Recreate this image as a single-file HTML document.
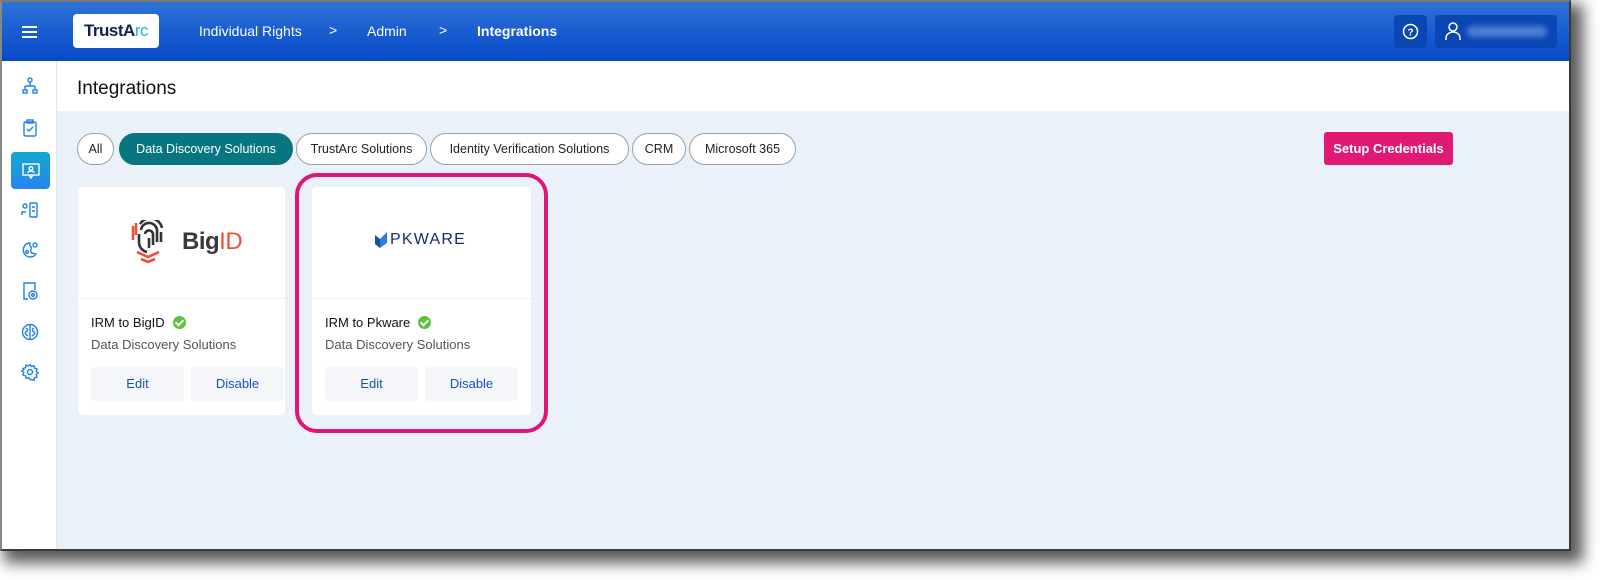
<!DOCTYPE html>
<html><head><meta charset="utf-8"><style>
*{box-sizing:border-box;margin:0;padding:0}
body{width:1600px;height:580px;background:#fff;font-family:"Liberation Sans",sans-serif;position:relative;overflow:hidden}
.frame{position:absolute;left:0;top:0;width:1571px;height:551px;background:#eaf1f9;border:2px solid #3a3a3a;border-top-color:#777;border-left-color:#888;box-shadow:8px 8px 14px 4px rgba(0,0,0,.65)}
.hdr{position:absolute;left:0;top:0;width:1567px;height:59px;background:linear-gradient(#2f72d6,#0549c9)}
.abs{position:absolute}
.wt{color:#fff;font-size:14px}
.side{position:absolute;left:0;top:59px;width:55px;height:488px;background:#fff;border-right:1px solid #e3e8ef}
.title{position:absolute;left:55px;top:59px;width:1512px;height:50px;background:#fff}
.chip{position:absolute;top:131px;height:32px;border:1px solid #9aa0a6;border-radius:16px;background:#fff;font-size:12.5px;color:#222;line-height:30px;text-align:center}
.card{position:absolute;top:185px;height:228px;background:#fff;border-radius:4px}
.btn{position:absolute;top:180px;height:34px;width:93px;background:#f4f6fa;border-radius:3px;color:#1a4fc4;font-size:13px;text-align:center;line-height:34px}
.ct{position:absolute;left:13px;top:128px;font-size:13px;color:#111}
.cs{position:absolute;left:13px;top:150px;font-size:13px;color:#555}
.ok{display:inline-block;width:13px;height:13px;border-radius:50%;background:#5ac43a;vertical-align:-2px;margin-left:8px;position:relative}
.ok:after{content:"";position:absolute;left:4px;top:2px;width:3px;height:6px;border:solid #fff;border-width:0 2px 2px 0;transform:rotate(45deg)}
.ic{position:absolute;left:19px;width:18px;height:18px}
</style></head><body>
<div class="frame">
 <div class="hdr">
  <div class="abs" style="left:20px;top:24px;width:15px;height:2px;background:#fff;box-shadow:0 5px 0 #fff,0 10px 0 #fff"></div>
  <div class="abs" style="left:71px;top:12px;width:86px;height:34px;background:#fff;border-radius:4px;font-size:17px;color:#14224a;line-height:34px;text-align:center;letter-spacing:-.5px;font-weight:bold">TrustA<span style="color:#1bb8d8;font-weight:normal">rc</span></div>
  <div class="abs wt" style="left:197px;top:21px">Individual Rights</div>
  <div class="abs wt" style="left:327px;top:20px">&gt;</div>
  <div class="abs wt" style="left:365px;top:21px">Admin</div>
  <div class="abs wt" style="left:437px;top:20px">&gt;</div>
  <div class="abs wt" style="left:475px;top:21px;font-weight:bold">Integrations</div>
  <div class="abs" style="left:1392px;top:13px;width:33px;height:33px;background:#0a46b4;border-radius:4px"><svg width="33" height="33"><circle cx="16.5" cy="16.5" r="7" fill="none" stroke="#fff" stroke-width="1.5"/><text x="16.5" y="20.5" fill="#fff" font-size="10" text-anchor="middle" font-family="Liberation Sans" font-weight="bold">?</text></svg></div>
  <div class="abs" style="left:1433px;top:13px;width:122px;height:33px;background:#0a46b4;border-radius:4px"><svg width="40" height="33"><circle cx="18" cy="12" r="4" fill="none" stroke="#fff" stroke-width="1.5"/><path d="M11 25v-2a7 6 0 0 1 14 0v2" fill="none" stroke="#fff" stroke-width="1.5"/></svg><div class="abs" style="left:32px;top:11px;width:80px;height:11px;background:#4f7fd4;border-radius:5px;filter:blur(3px)"></div></div>
 </div>
 <div class="side">
  <svg class="ic" style="top:16px" viewBox="0 0 18 18" fill="none" stroke="#1e82e6" stroke-width="1.4"><circle cx="9" cy="3" r="2"/><path d="M9 5v4M4 9h10M4 9v4M14 9v4"/><rect x="2" y="13" width="4" height="3"/><rect x="12" y="13" width="4" height="3"/></svg>
  <svg class="ic" style="top:58px" viewBox="0 0 18 18" fill="none" stroke="#1e82e6" stroke-width="1.4"><rect x="3" y="3" width="12" height="14" rx="1.5"/><rect x="6" y="1" width="6" height="3"/><path d="M6 10l2 2 4-4"/></svg>
  <div class="abs" style="left:9px;top:91px;width:39px;height:37px;border-radius:4px;background:linear-gradient(#12a9cf,#2a83f0)"><svg style="position:absolute;left:11px;top:10px" width="18" height="18" viewBox="0 0 18 18" fill="none" stroke="#fff" stroke-width="1.4"><rect x="1" y="2" width="16" height="11"/><circle cx="9" cy="6.5" r="1.8"/><path d="M6 11a3 2 0 0 1 6 0M7 13l2 3 2-3"/></svg></div>
  <svg class="ic" style="top:140px" viewBox="0 0 18 18" fill="none" stroke="#1e82e6" stroke-width="1.4"><circle cx="4" cy="5" r="2"/><path d="M1 14v-3h4"/><rect x="9" y="2" width="7" height="14" rx="1"/><path d="M11 6h3M11 10h3"/></svg>
  <svg class="ic" style="top:180px" viewBox="0 0 18 18" fill="none" stroke="#1e82e6" stroke-width="1.4"><path d="M9 2a7 7 0 1 0 6 11c-2-1-4 0-5-2s1-3 0-5-2-1-1-4z"/><circle cx="14" cy="4" r="2"/><circle cx="6" cy="11" r="1.3"/></svg>
  <svg class="ic" style="top:221px" viewBox="0 0 18 18" fill="none" stroke="#1e82e6" stroke-width="1.4"><path d="M7 17H3V1h11v7"/><circle cx="12" cy="13" r="4"/><circle cx="12" cy="13" r="1.3"/></svg>
  <svg class="ic" style="top:262px" viewBox="0 0 18 18" fill="none" stroke="#1e82e6" stroke-width="1.4"><circle cx="9" cy="9" r="7.5"/><path d="M9 2v14M5 5c2 1 2 3 0 4s0 3 2 4M13 5c-2 1-2 3 0 4s0 3-2 4"/></svg>
  <svg class="ic" style="top:302px" viewBox="0 0 18 18" fill="none" stroke="#1e82e6" stroke-width="1.4"><circle cx="9" cy="9" r="2.5"/><path d="M9 1.5l1.5 2 2.5-.8.5 2.5 2.5.8-.8 2.5 2 1.5-2 1.5.8 2.5-2.5.8-.5 2.5-2.5-.8L9 16.5l-1.5-2-2.5.8-.5-2.5-2.5-.8.8-2.5-2-1.5 2-1.5L2 5.5l2.5-.8.5-2.5 2.5.8z"/></svg>
 </div>
 <div class="title"><div class="abs" style="left:20px;top:17px;font-size:19px;color:#111">Integrations</div></div>
 <div class="chip" style="left:75px;width:37px">All</div>
 <div class="chip" style="left:117px;width:174px;background:#087680;border-color:#087680;color:#fff">Data Discovery Solutions</div>
 <div class="chip" style="left:294px;width:131px">TrustArc Solutions</div>
 <div class="chip" style="left:428px;width:199px">Identity Verification Solutions</div>
 <div class="chip" style="left:630px;width:54px">CRM</div>
 <div class="chip" style="left:687px;width:107px">Microsoft 365</div>
 <div class="abs" style="left:1322px;top:130px;width:129px;height:33px;background:#e01a73;border-radius:3px;color:#fff;font-size:13px;font-weight:bold;text-align:center;line-height:33px">Setup Credentials</div>

 <div class="card" style="left:76px;width:207px">
  <div class="abs" style="left:0;top:111px;width:207px;height:1px;background:#eceff3"></div>
  <svg class="abs" style="left:53px;top:33px" width="34" height="46" viewBox="0 0 34 46" fill="none" stroke-width="2.6"><path d="M2 6v14M5 3v12" stroke="#f04e37"/><path d="M9 4a12 12 0 0 1 22 4M10 10a8 8 0 0 1 16 2v10M14 14a4 4 0 0 1 8 1v10M18 18v10M8 14v8a10 10 0 0 0 8 10M30 12v10" stroke="#333"/><path d="M6 32l11 5 11-5M10 39l7 3 7-3" stroke="#f04e37"/></svg>
  <div class="abs" style="left:104px;top:41px;font-size:24px;font-weight:bold;color:#3a3a3a;letter-spacing:-.5px">Big<span style="color:#f04e37;font-weight:normal">ID</span></div>
  <div class="ct">IRM to BigID<span class="ok"></span></div>
  <div class="cs">Data Discovery Solutions</div>
  <div class="btn" style="left:13px">Edit</div>
  <div class="btn" style="left:113px">Disable</div>
 </div>
 <div class="card" style="left:310px;width:219px">
  <div class="abs" style="left:0;top:111px;width:219px;height:1px;background:#eceff3"></div>
  <svg class="abs" style="left:63px;top:45px" width="12" height="16" viewBox="0 0 12 16"><path d="M0 3l5 4V16L0 12z" fill="#1d4fa8"/><path d="M5 7l7-7v11l-7 5z" fill="#2b7de0"/></svg>
  <div class="abs" style="left:78px;top:44px;font-size:16px;color:#1a2a6e;letter-spacing:1.2px">PKWARE</div>
  <div class="ct">IRM to Pkware<span class="ok"></span></div>
  <div class="cs">Data Discovery Solutions</div>
  <div class="btn" style="left:13px">Edit</div>
  <div class="btn" style="left:113px">Disable</div>
 </div>
 <div class="abs" style="left:293px;top:171px;width:253px;height:260px;border:4px solid #e0157a;border-radius:22px"></div>
</div>
</body></html>
